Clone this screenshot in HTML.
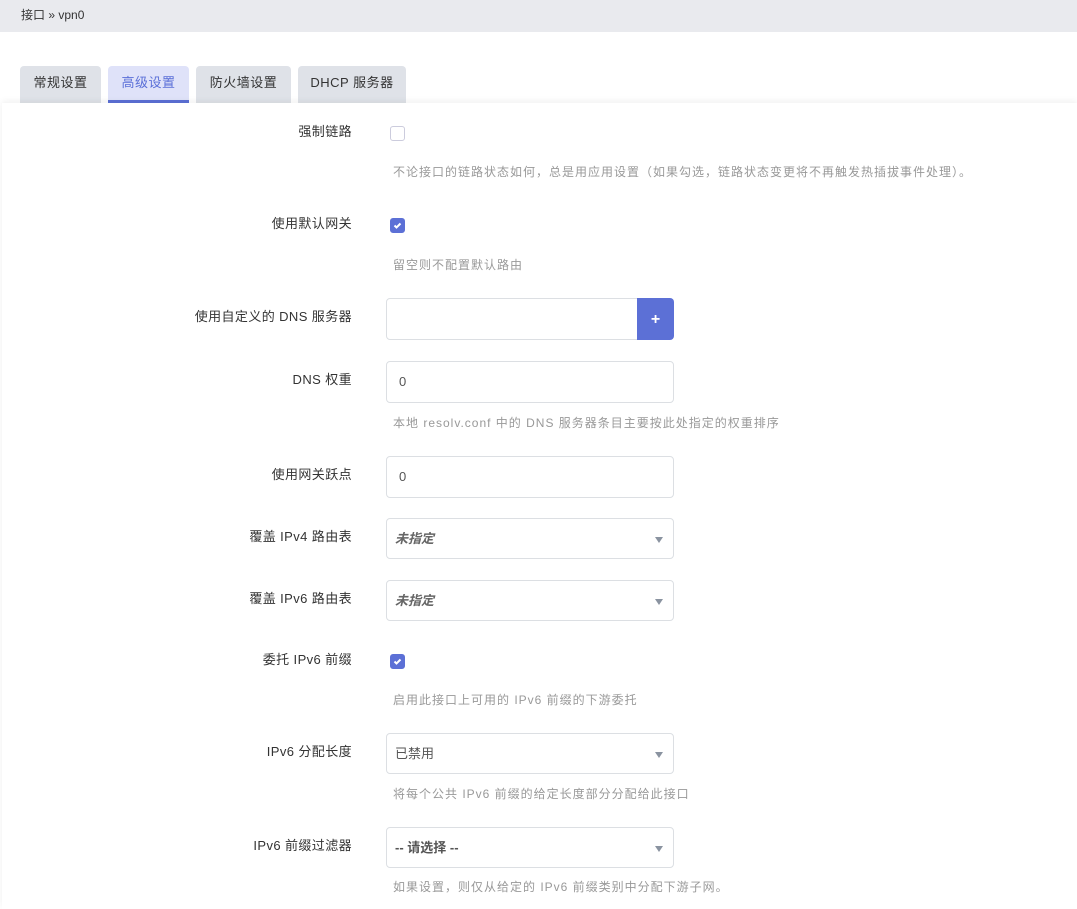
<!DOCTYPE html>
<html><head><meta charset="utf-8"><style>
*{box-sizing:border-box;margin:0;padding:0}
body{width:1077px;height:909px;background:#fff;font-family:"Liberation Sans","Noto Sans CJK SC",sans-serif;font-size:13px;color:#333;position:relative;overflow:hidden}
.hdr{position:absolute;left:0;top:0;width:1077px;height:32px;background:#e9eaee}
.hdr span{position:absolute;left:21px;top:6px;font-size:12px;color:#333}
.tab{position:absolute;top:66px;height:37px;background:#dfe2e8;border-radius:4px 4px 0 0;color:#333;font-size:13px;text-align:center;line-height:34px;letter-spacing:0.5px}
.tab.act{background:#dfe2f9;color:#5a6fd8;border-bottom:3px solid #5c70d6}
.panel{position:absolute;left:2px;top:103px;width:1075px;height:806px;background:#fff;box-shadow:0 -2px 6px rgba(0,0,0,.06)}
.lbl{position:absolute;right:725px;font-size:13px;color:#333;white-space:nowrap;letter-spacing:0.4px;margin-top:-2px}
.desc{position:absolute;left:393px;font-size:12px;color:#999;white-space:nowrap;letter-spacing:1px}
.cb{position:absolute;left:390px;width:15px;height:15px;border:1px solid #ccd;border-radius:3px;background:#fff}
.cb.on{background:#5c70d6;border-color:#5c70d6}
.cb.on svg{position:absolute;left:1px;top:1px}
.inp{position:absolute;left:386px;width:288px;height:42px;border:1px solid #dcdfe3;border-radius:4px;background:#fff;padding-left:12px;line-height:40px;font-size:13px;color:#555}
.sel:after{content:"";position:absolute;right:10px;top:18px;border-left:4px solid transparent;border-right:4px solid transparent;border-top:6px solid #8a93a0}
.plus{position:absolute;left:637px;top:298px;width:37px;height:42px;background:#5c70d6;border-radius:0 4px 4px 0;color:#fff;text-align:center;line-height:44px;font-size:16px;font-weight:bold}
</style></head><body>
<div class="hdr"><span>接口 » vpn0</span></div>
<div class="tab" style="left:20px;width:81px">常规设置</div>
<div class="tab act" style="left:108px;width:81px">高级设置</div>
<div class="tab" style="left:196px;width:95px">防火墙设置</div>
<div class="tab" style="left:298px;width:108px">DHCP 服务器</div>
<div class="panel"></div>

<div class="lbl" style="top:123px">强制链路</div>
<div class="cb" style="top:126px"></div>
<div class="desc" style="top:163px">不论接口的链路状态如何，总是用应用设置（如果勾选，链路状态变更将不再触发热插拔事件处理）。</div>

<div class="lbl" style="top:215px">使用默认网关</div>
<div class="cb on" style="top:218px"><svg width="11" height="11" viewBox="0 0 11 11"><path d="M2.5 5.5 L4.5 7.5 L8.5 3.5" stroke="#fff" stroke-width="2" fill="none"/></svg></div>
<div class="desc" style="top:256px">留空则不配置默认路由</div>

<div class="lbl" style="top:308px">使用自定义的 DNS 服务器</div>
<div class="inp" style="top:298px;width:252px;border-radius:4px 0 0 4px"></div>
<div class="plus">+</div>

<div class="lbl" style="top:371px">DNS 权重</div>
<div class="inp" style="top:361px">0</div>
<div class="desc" style="top:414px">本地 resolv.conf 中的 DNS 服务器条目主要按此处指定的权重排序</div>

<div class="lbl" style="top:466px">使用网关跃点</div>
<div class="inp" style="top:456px">0</div>

<div class="lbl" style="top:528px">覆盖 IPv4 路由表</div>
<div class="inp sel" style="top:518px;height:41px;font-style:italic;font-weight:bold;color:#666;padding-left:8px">未指定</div>

<div class="lbl" style="top:590px">覆盖 IPv6 路由表</div>
<div class="inp sel" style="top:580px;height:41px;font-style:italic;font-weight:bold;color:#666;padding-left:8px">未指定</div>

<div class="lbl" style="top:651px">委托 IPv6 前缀</div>
<div class="cb on" style="top:654px"><svg width="11" height="11" viewBox="0 0 11 11"><path d="M2.5 5.5 L4.5 7.5 L8.5 3.5" stroke="#fff" stroke-width="2" fill="none"/></svg></div>
<div class="desc" style="top:691px">启用此接口上可用的 IPv6 前缀的下游委托</div>

<div class="lbl" style="top:743px">IPv6 分配长度</div>
<div class="inp sel" style="top:733px;height:41px;padding-left:8px">已禁用</div>
<div class="desc" style="top:785px">将每个公共 IPv6 前缀的给定长度部分分配给此接口</div>

<div class="lbl" style="top:837px">IPv6 前缀过滤器</div>
<div class="inp sel" style="top:827px;height:41px;padding-left:8px;font-weight:bold;color:#555">-- 请选择 --</div>
<div class="desc" style="top:878px">如果设置，则仅从给定的 IPv6 前缀类别中分配下游子网。</div>
</body></html>
